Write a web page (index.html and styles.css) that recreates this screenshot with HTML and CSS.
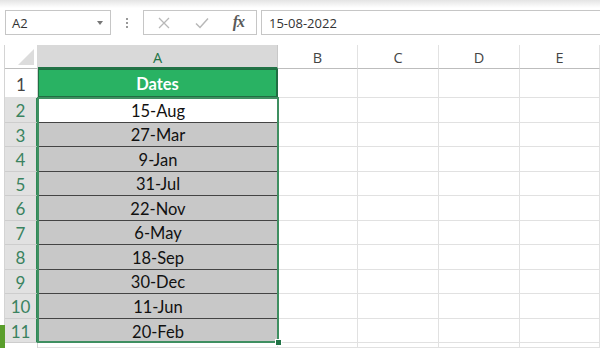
FILE: index.html
```html
<!DOCTYPE html>
<html>
<head>
<meta charset="utf-8">
<link rel="stylesheet" href="styles.css">
</head>
<body>
<div class="topshade"></div>
<div class="formula-row">
  <div class="namebox"><span class="nb-text">A2</span><span class="nb-arrow"></span></div>
  <div class="dots"><span></span><span></span><span></span></div>
  <div class="fxbox">
    <svg class="ic" width="14" height="14" viewBox="0 0 14 14"><path d="M2 2 L12 12 M12 2 L2 12" stroke="#b8b8b8" stroke-width="1.3" fill="none"/></svg>
    <svg class="ic" width="16" height="14" viewBox="0 0 16 14"><path d="M2 7.5 L6 11.5 L14 2.5" stroke="#b8b8b8" stroke-width="1.5" fill="none"/></svg>
    <span class="fx">fx</span>
  </div>
  <div class="formula-input">15-08-2022</div>
</div>
<div class="sheet">
  <div class="corner"></div>
  <div class="ch ch-sel">A</div>
  <div class="ch">B</div>
  <div class="ch">C</div>
  <div class="ch">D</div>
  <div class="ch">E</div>

  <div class="rh">1</div>
  <div class="c head">Dates</div>
  <div class="g"></div><div class="g"></div><div class="g"></div><div class="g"></div>

  <div class="rh rh-sel">2</div>
  <div class="c active">15-Aug</div>
  <div class="g"></div><div class="g"></div><div class="g"></div><div class="g"></div>

  <div class="rh rh-sel">3</div>
  <div class="c gray">27-Mar</div>
  <div class="g"></div><div class="g"></div><div class="g"></div><div class="g"></div>

  <div class="rh rh-sel">4</div>
  <div class="c gray">9-Jan</div>
  <div class="g"></div><div class="g"></div><div class="g"></div><div class="g"></div>

  <div class="rh rh-sel">5</div>
  <div class="c gray">31-Jul</div>
  <div class="g"></div><div class="g"></div><div class="g"></div><div class="g"></div>

  <div class="rh rh-sel">6</div>
  <div class="c gray">22-Nov</div>
  <div class="g"></div><div class="g"></div><div class="g"></div><div class="g"></div>

  <div class="rh rh-sel">7</div>
  <div class="c gray">6-May</div>
  <div class="g"></div><div class="g"></div><div class="g"></div><div class="g"></div>

  <div class="rh rh-sel">8</div>
  <div class="c gray">18-Sep</div>
  <div class="g"></div><div class="g"></div><div class="g"></div><div class="g"></div>

  <div class="rh rh-sel">9</div>
  <div class="c gray">30-Dec</div>
  <div class="g"></div><div class="g"></div><div class="g"></div><div class="g"></div>

  <div class="rh rh-sel">10</div>
  <div class="c gray">11-Jun</div>
  <div class="g"></div><div class="g"></div><div class="g"></div><div class="g"></div>

  <div class="rh rh-sel">11</div>
  <div class="c gray last">20-Feb</div>
  <div class="g"></div><div class="g"></div><div class="g"></div><div class="g"></div>

  <div class="rh rh-end"></div>
  <div class="g"></div>
  <div class="g"></div><div class="g"></div><div class="g"></div><div class="g"></div>

  <div class="selection"></div>
  <div class="handle"></div>
</div>
<div class="sheet-tab"></div>
</body>
</html>
```
FILE: styles.css
```css
* { box-sizing: border-box; }
html, body { margin: 0; padding: 0; }
body {
  width: 600px;
  height: 348px;
  overflow: hidden;
  background: #fff;
  position: relative;
  font-family: "Open Sans", "Liberation Sans", sans-serif;
}
.topshade {
  height: 8px;
  background: linear-gradient(#e4e4e4, #fff);
}
.formula-row {
  display: flex;
  height: 25px;
  margin-top: 2px;
  padding-left: 5px;
}
.namebox {
  width: 106px;
  border: 1px solid #c6c6c6;
  display: flex;
  align-items: center;
  justify-content: space-between;
  padding: 0 7px 0 6px;
  font-size: 13px;
  color: #333;
}
.nb-arrow {
  width: 0; height: 0;
  border-left: 3.5px solid transparent;
  border-right: 3.5px solid transparent;
  border-top: 4px solid #777;
}
.dots {
  width: 32px;
  display: flex;
  flex-direction: column;
  align-items: center;
  justify-content: center;
  gap: 2px;
}
.dots span {
  width: 2px; height: 2px;
  background: #999;
}
.fxbox {
  width: 114px;
  border: 1px solid #c6c6c6;
  display: flex;
  align-items: center;
  justify-content: space-between;
  padding: 0 12px 0 13px;
}
.fx {
  font-family: "Liberation Serif", serif;
  font-style: italic;
  font-weight: bold;
  font-size: 16px;
  color: #5a5a5a;
  letter-spacing: -1px;
  padding-bottom: 2px;
}
.formula-input {
  flex: 1;
  margin-left: 4px;
  border: 1px solid #c6c6c6;
  border-right: none;
  display: flex;
  align-items: center;
  padding-left: 7px;
  font-size: 13px;
  color: #333;
}
.sheet {
  position: relative;
  margin-top: 10px;
  margin-left: 4px;
  border-left: 1px solid #d4d4d4;
  display: grid;
  grid-template-columns: 33px 240px 80px 81px 81px 1fr;
  grid-template-rows: 24px 29px repeat(10, 24.5px) 5px;
}
.corner {
  position: relative;
  border-bottom: 1px solid #bdbdbd;
  border-right: 1px solid #d8d8d8;
}
.corner::after {
  content: "";
  position: absolute;
  right: 3px;
  bottom: 3px;
  width: 0; height: 0;
  border-left: 16px solid transparent;
  border-bottom: 16px solid #dcdcdc;
}
.ch {
  display: flex;
  align-items: center;
  justify-content: center;
  font-size: 14.5px;
  color: #444;
  border-right: 1px solid #e2e2e2;
  border-bottom: 1px solid #bdbdbd;
  padding-top: 2px;
}
.ch-sel {
  background: #d9d9d9;
  color: #217346;
  border-bottom: 2px solid #217346;
  border-right: 1px solid #c8c8c8;
}
.rh {
  display: flex;
  align-items: center;
  justify-content: center;
  font-family: "Lato", sans-serif;
  font-size: 17px;
  color: #444;
  border-right: 1px solid #d4d4d4;
  border-bottom: 1px solid #e1e1e1;
  padding-top: 2px;
}
.rh-sel {
  background: #e1e1e1;
  color: #3a8360;
  border-right: 2px solid #2e8a57;
  border-bottom: 1px solid #cdcdcd;
}
.rh-end { border-bottom: none; }
.c {
  display: flex;
  align-items: center;
  justify-content: center;
  font-family: "Lato", sans-serif;
  font-size: 16.5px;
  color: #111;
  padding-top: 2px;
}
.head {
  background: #29b263;
  color: #fff;
  font-weight: bold;
  border: 1px solid #1f6e42;
  border-width: 1px 2px 2px 1px;
}
.active {
  background: #fff;
  border-bottom: 1px solid #444;
}
.gray {
  background: #c8c8c8;
  border-bottom: 1px solid #444;
}
.gray.last { border-bottom: none; }
.g {
  border-right: 1px solid #e1e1e1;
  border-bottom: 1px solid #e1e1e1;
}
.selection {
  position: absolute;
  left: 32px;
  top: 52px;
  width: 242px;
  height: 246px;
  border: 2px solid #3f8f61;
  pointer-events: none;
}
.handle {
  position: absolute;
  left: 270px;
  top: 294px;
  width: 7px;
  height: 7px;
  background: #217346;
  border: 1px solid #fff;
}
.sheet-tab {
  position: absolute;
  left: 0;
  top: 325px;
  width: 5px;
  height: 23px;
  background: #5a9e2c;
}
```
